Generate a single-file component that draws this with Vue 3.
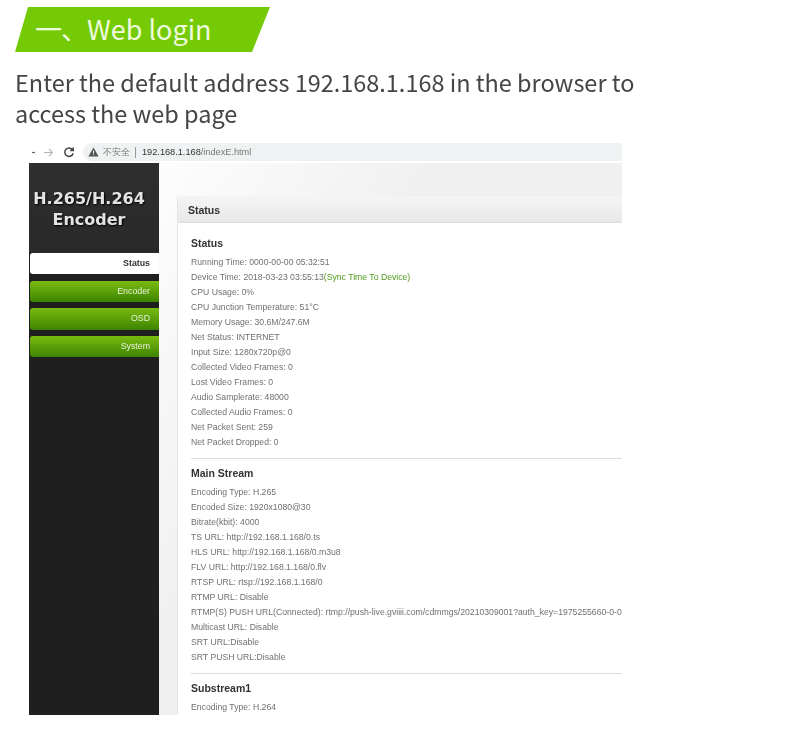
<script setup>
const nav = ['Encoder', 'OSD', 'System']
const sections = [
  { title: 'Status', rows: [
    ['Running Time: 0000-00-00 05:32:51'],
    ['Device Time: 2018-03-23 03:55:13', '(Sync Time To Device)'],
    ['CPU Usage: 0%'],
    ['CPU Junction Temperature: 51°C'],
    ['Memory Usage: 30.6M/247.6M'],
    ['Net Status: INTERNET'],
    ['Input Size: 1280x720p@0'],
    ['Collected Video Frames: 0'],
    ['Lost Video Frames: 0'],
    ['Audio Samplerate: 48000'],
    ['Collected Audio Frames: 0'],
    ['Net Packet Sent: 259'],
    ['Net Packet Dropped: 0'],
  ]},
  { title: 'Main Stream', rows: [
    ['Encoding Type: H.265'],
    ['Encoded Size: 1920x1080@30'],
    ['Bitrate(kbit): 4000'],
    ['TS URL: http://192.168.1.168/0.ts'],
    ['HLS URL: http://192.168.1.168/0.m3u8'],
    ['FLV URL: http://192.168.1.168/0.flv'],
    ['RTSP URL: rtsp://192.168.1.168/0'],
    ['RTMP URL: Disable'],
    ['RTMP(S) PUSH URL(Connected): rtmp://push-live.gviiii.com/cdmmgs/20210309001?auth_key=1975255660-0-0'],
    ['Multicast URL: Disable'],
    ['SRT URL:Disable'],
    ['SRT PUSH URL:Disable'],
  ]},
  { title: 'Substream1', rows: [['Encoding Type: H.264']] },
]
</script>

<template>
  <div class="page">
    <div class="banner"><span class="num">一、</span>Web login</div>
    <p class="intro">Enter the default address 192.168.1.168 in the browser to<br>access the web page</p>
    <div class="shot">
      <div class="bar">
        <svg class="nav-icons" width="54" height="14" viewBox="0 0 54 14">
          <path d="M3 7.500h3" stroke="#666" stroke-width="1.200" fill="none"/>
          <path d="M15 7.500h8M20 4l3.500 3.500-3.500 3.500" stroke="#b5b5b5" stroke-width="1.100" fill="none"/>
          <path d="M43.600 5a4.200 4.200 0 1 0 .5 3.200M44.200 2.600v3h-3" stroke="#444" stroke-width="1.500" fill="none"/>
        </svg>
        <div class="url">
          <svg width="11" height="10" viewBox="0 0 11 10"><path d="M5.500.6 10.600 9.400H.4z" fill="#555"/><path d="M5.500 3.600v2.800M5.500 7.200v.9" stroke="#fff" stroke-width="1"/></svg>
          <span class="insecure">不安全</span>
          <span class="sep"></span>
          <span class="host">192.168.1.168<span class="path">/indexE.html</span></span>
        </div>
      </div>
      <div class="app">
        <aside class="side">
          <div class="logo">H.265/H.264<br>Encoder</div>
          <div class="item active">Status</div>
          <div v-for="n in nav" :key="n" class="item">{{ n }}</div>
        </aside>
        <main class="main">
          <div class="panel">
            <div class="panel-head">Status</div>
            <div class="panel-body">
              <section v-for="s in sections" :key="s.title" class="sec">
                <h3>{{ s.title }}</h3>
                <div v-for="r in s.rows" :key="r[0]" class="row">{{ r[0] }}<span v-if="r[1]" class="link">{{ r[1] }}</span></div>
              </section>
            </div>
          </div>
        </main>
      </div>
    </div>
  </div>
</template>

<style>
html, body { margin: 0; background: #fff; }
</style>

<style scoped>
.page { width: 791px; height: 733px; overflow: hidden; box-sizing: border-box; padding-top: 7px; font-family: "Noto Sans CJK SC", "Noto Sans", sans-serif; filter: blur(.35px); }
.banner {
  width: 255px; height: 45px; margin-left: 15px; box-sizing: border-box; padding-left: 20px;
  background: #74cb05; color: #eef9dd; font-size: 27px; line-height: 43px; white-space: nowrap;
  clip-path: polygon(13px 0, 100% 0, 237px 100%, 0 100%);
}
.num { letter-spacing: -1px; }
.intro { margin: 15px 0 0 15px; font-size: 23.47px; line-height: 31px; color: #454545; white-space: nowrap; }
.shot { width: 593px; height: 572.5px; margin: 13px 0 0 29px; display: flex; flex-direction: column; overflow: hidden; font-family: "Liberation Sans", Arial, sans-serif; }
.bar { height: 21px; flex: none; background: #fff; display: flex; align-items: flex-start; }
.nav-icons { flex: none; margin-top: 3px; }
.url { flex: 1; display: flex; align-items: center; gap: 4px; height: 18px; margin-top: 1px; padding-left: 5px; border-radius: 9px 0 0 9px; background: #eff2f3; font-size: 9.2px; color: #777; }
.host { color: #333; margin-left: 1px; }
.path { color: #777; }
.sep { width: 1px; height: 11px; background: #999; margin: 0 1px; }
.app { flex: 1; display: flex; min-height: 0; }
.side { width: 130px; flex: none; box-sizing: border-box; background: #1f1f1f; }
.logo { height: 90px; padding: 26px 10px 0 0; box-sizing: border-box; text-align: center; color: #e4e4e4; font: bold 16px/20.5px "DejaVu Sans", sans-serif; text-shadow: 1px 1px 2px #000; background: linear-gradient(#2f2f2f, #292929); white-space: nowrap; }
.item { height: 21.5px; margin: 0 0 6px 1px; border-radius: 3px 0 0 3px; padding-right: 9px; text-align: right; font-size: 8.8px; line-height: 21px; color: #e8f2da; background: linear-gradient(#79bb10, #3d8400); }
.item.active { background: #fff; color: #333; font-weight: bold; height: 21px; margin-bottom: 6.500px; }
.main { flex: 1; background: linear-gradient(120deg, #fdfdfd 0, #f0f0f0 240px); padding: 33px 0 0 19px; min-width: 0; overflow: hidden; }
.panel { background: #fff; border-radius: 3px 0 0 0; box-shadow: -1px 0 0 #e4e4e4; }
.panel-head { height: 27px; box-sizing: border-box; padding-left: 10px; background: linear-gradient(#f5f5f5, #e8e8e8); border-bottom: 1px solid #ddd; color: #333; font-size: 10.5px; font-weight: bold; line-height: 28px; }
.panel-body { padding: 12px 0 0 13px; }
.sec { border-bottom: 1px solid #ddd; padding-bottom: 8px; margin-bottom: 6px; }
.sec h3 { margin: 0 0 4px; font-size: 10.5px; line-height: 16px; color: #333; }
.row { font-size: 8.66px; line-height: 15px; color: #707070; white-space: nowrap; overflow: hidden; }
.link { color: #4f9a1c; }
</style>
